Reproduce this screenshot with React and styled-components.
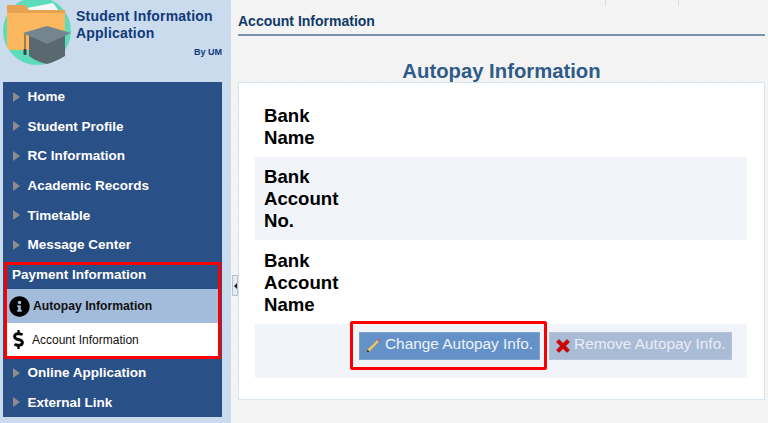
import React from "react";
import styled, { createGlobalStyle } from "styled-components";
import { FaInfoCircle, FaDollarSign } from "react-icons/fa";

const GlobalStyle = createGlobalStyle`
  html, body {
    margin: 0;
    padding: 0;
    height: 423px;
    overflow: hidden;
    font-family: "Liberation Sans", Arial, sans-serif;
  }
  * {
    box-sizing: border-box;
  }
`;

const Page = styled.div`
  display: flex;
  width: 768px;
  height: 423px;
  overflow: hidden;
`;

const Sidebar = styled.aside`
  width: 231px;
  flex: none;
  padding: 0 9px 0 3px;
  background: #c9dbed;
`;

const Brand = styled.header`
  display: flex;
  height: 82px;
  overflow: hidden;
`;

const Logo = styled.svg`
  width: 72px;
  height: 70px;
  flex: none;
`;

const BrandText = styled.div`
  flex: 1;
  padding: 8px 0 0 1px;
  color: #12397a;
`;

const BrandName = styled.div`
  font-size: 14px;
  font-weight: bold;
  line-height: 17px;
  letter-spacing: 0.2px;
`;

const BrandBy = styled.div`
  margin-top: 5px;
  font-size: 9px;
  font-weight: bold;
  line-height: 11px;
  text-align: right;
`;

const Nav = styled.nav`
  background: #2a5088;
`;

const NavItem = styled.div`
  display: flex;
  align-items: center;
  height: 29.6px;
  padding-left: 9.5px;
  color: #fff;
  font-size: 13.5px;
  font-weight: bold;
`;

const Arrow = styled.span`
  width: 0;
  height: 0;
  margin-right: 8px;
  border-style: solid;
  border-width: 5.5px 0 5.5px 7px;
  border-color: transparent transparent transparent #8c8c8c;
`;

const PaymentGroup = styled.div`
  margin: 2.4px 1px -1px;
  border: 3px solid #fa0000;
  border-radius: 1px;
`;

const PaymentTitle = styled.div`
  display: flex;
  align-items: center;
  height: 24px;
  padding: 0 0 5px 5px;
  color: #fff;
  font-size: 13.5px;
  font-weight: bold;
`;

const SubItem = styled.div`
  display: flex;
  align-items: center;
  height: ${(props) => (props.$active ? "34px" : "33px")};
  padding-top: 1px;
  color: #111;
  font-size: ${(props) => (props.$active ? "12.2px" : "12px")};
  font-weight: ${(props) => (props.$active ? "bold" : "normal")};
  background: ${(props) => (props.$active ? "#a3bcdc" : "#fff")};
`;

const SubIcon = styled.span`
  display: flex;
  align-items: center;
  justify-content: center;
  width: ${(props) => (props.$active ? "26px" : "25px")};
  flex: none;
  padding-right: 2px;
  color: #000;
  font-size: ${(props) => (props.$active ? "21px" : "19px")};
`;

const Main = styled.main`
  position: relative;
  flex: 1;
  min-width: 0;
  padding: 0 3px 0 7px;
  background: repeating-linear-gradient(135deg, #f5f5f5 0 1px, #f2f2f2 1px 2px);
`;

const TopTicks = styled.div`
  display: flex;
  justify-content: flex-end;
  gap: 72px;
  height: 6px;
  padding-right: 86px;
`;

const Tick = styled.span`
  width: 1px;
  background: #dcdcdc;
`;

const Splitter = styled.button`
  position: absolute;
  top: 275px;
  left: 1px;
  display: flex;
  align-items: center;
  justify-content: center;
  width: 6px;
  height: 21px;
  padding: 0;
  border: 1px solid #b8c2cc;
  background: #e6ebf0;
  &::before {
    content: "";
    border-style: solid;
    border-width: 3px 3px 3px 0;
    border-color: transparent #222 transparent transparent;
  }
`;

const PageTitle = styled.h1`
  height: 30px;
  margin: 0;
  padding-top: 6px;
  border-bottom: 2px solid #7b93ae;
  color: #0f3a68;
  font-size: 14px;
  font-weight: bold;
  line-height: 18px;
`;

const SectionTitle = styled.h2`
  height: 46px;
  margin: 0;
  padding-top: 25px;
  color: #2f5b88;
  font-size: 20.3px;
  font-weight: bold;
  line-height: 21px;
  text-align: center;
`;

const Card = styled.section`
  height: 318px;
  padding: 13px 17px 0 16px;
  border: 1px solid #d8e4ee;
  background: #fff;
`;

const Row = styled.div`
  display: flex;
  align-items: center;
  height: ${(props) => props.$height}px;
  padding: ${(props) => props.$nudge || 0}px 0 0 9px;
  background: ${(props) => (props.$shaded ? "#f1f5fa" : "#fff")};
`;

const RowLabel = styled.div`
  width: 86px;
  color: #000;
  font-size: 18.6px;
  font-weight: bold;
  line-height: 22px;
`;

const ActionRow = styled.div`
  display: flex;
  align-items: flex-start;
  height: 54px;
  padding-left: 95px;
  background: #f1f5fa;
`;

const Highlight = styled.div`
  height: 49px;
  margin-top: -3px;
  padding: 8px 4px 7px 6px;
  border: 3px solid #fa0000;
  border-radius: 2px;
`;

const ActionButton = styled.button`
  display: flex;
  align-items: center;
  gap: 4px;
  height: 28px;
  margin: ${(props) => (props.$muted ? "8px 0 0 2px" : "0")};
  padding: 0 6px 4px;
  border: 1px solid ${(props) => (props.$muted ? "#b4c4da" : "#7fa3cf")};
  color: ${(props) => (props.$muted ? "#e9eef6" : "#eef3fa")};
  font-family: inherit;
  font-size: 15.4px;
  white-space: nowrap;
  background: ${(props) => (props.$muted ? "#a9bbd5" : "#6491c8")};
`;

const ButtonIcon = styled.svg`
  width: ${(props) => props.$size}px;
  height: ${(props) => props.$size}px;
  flex: none;
  margin-top: 3px;
`;

const menuTop = ["Home", "Student Profile", "RC Information", "Academic Records", "Timetable", "Message Center"];
const menuBottom = ["Online Application", "External Link"];

export default function App() {
  return (
    <Page>
      <GlobalStyle />
      <Sidebar>
        <Brand>
          <Logo viewBox="0 0 72 70">
            <circle cx="34" cy="31" r="34" fill="#5cdcb9" />
            <path d="M24 8 L50 3 L56 11 L30 14 Z" fill="#f7f7f7" />
            <path d="M4 6 Q4 5 5 5 H22 L26 10 H62 V46 Q62 50 58 50 H8 Q4 50 4 46 Z" fill="#fbb85f" />
            <path d="M4 6 Q4 5 5 5 H22 L26 10 H62 V13 H4 Z" fill="#e5a251" />
            <path d="M26 35 L44 42 L62 35 V56 Q52 62 44 64 Q34 62 26 56 Z" fill="#59696f" />
            <path d="M20 33 L44 26 L68 33 L44 44 Z" fill="#748490" />
            <path d="M22 34 V50" stroke="#3d4a50" strokeWidth="1" />
            <rect x="20.5" y="49" width="3" height="6" rx="1" fill="#39464c" />
          </Logo>
          <BrandText>
            <BrandName>Student Information Application</BrandName>
            <BrandBy>By UM</BrandBy>
          </BrandText>
        </Brand>
        <Nav>
          {menuTop.map((label) => (
            <NavItem key={label}>
              <Arrow />
              {label}
            </NavItem>
          ))}
          <PaymentGroup>
            <PaymentTitle>Payment Information</PaymentTitle>
            <SubItem $active>
              <SubIcon $active>
                <FaInfoCircle />
              </SubIcon>
              Autopay Information
            </SubItem>
            <SubItem>
              <SubIcon>
                <FaDollarSign />
              </SubIcon>
              Account Information
            </SubItem>
          </PaymentGroup>
          {menuBottom.map((label) => (
            <NavItem key={label}>
              <Arrow />
              {label}
            </NavItem>
          ))}
        </Nav>
      </Sidebar>
      <Main>
        <Splitter aria-label="Collapse menu" />
        <TopTicks>
          <Tick />
          <Tick />
        </TopTicks>
        <PageTitle>Account Information</PageTitle>
        <SectionTitle>Autopay Information</SectionTitle>
        <Card>
          <Row $height={61}>
            <RowLabel>Bank Name</RowLabel>
          </Row>
          <Row $height={83} $shaded>
            <RowLabel>Bank Account No.</RowLabel>
          </Row>
          <Row $height={84} $nudge={2}>
            <RowLabel>Bank Account Name</RowLabel>
          </Row>
          <ActionRow>
            <Highlight>
              <ActionButton>
                <ButtonIcon $size={15} viewBox="0 0 15 15">
                  <path d="M0.5 14.5 L1.5 11.5 L11.5 2 L13 3.5 L3.5 13.5 Z" fill="#efc858" />
                  <path d="M11.5 2 L12.8 0.8 L14.3 2.3 L13 3.5 Z" fill="#d9534f" />
                  <path d="M0.5 14.5 L1.5 11.5 L3.5 13.5 Z" fill="#2b2b2b" />
                </ButtonIcon>
                Change Autopay Info.
              </ActionButton>
            </Highlight>
            <ActionButton $muted>
              <ButtonIcon $size={14} viewBox="0 0 14 14">
                <path
                  d="M0.5 3 L3 0.5 L7 4.5 L11 0.5 L13.5 3 L9.5 7 L13.5 11 L11 13.5 L7 9.5 L3 13.5 L0.5 11 L4.5 7 Z"
                  fill="#d40000"
                  stroke="#a80000"
                  strokeWidth="0.6"
                />
              </ButtonIcon>
              Remove Autopay Info.
            </ActionButton>
          </ActionRow>
        </Card>
      </Main>
    </Page>
  );
}
